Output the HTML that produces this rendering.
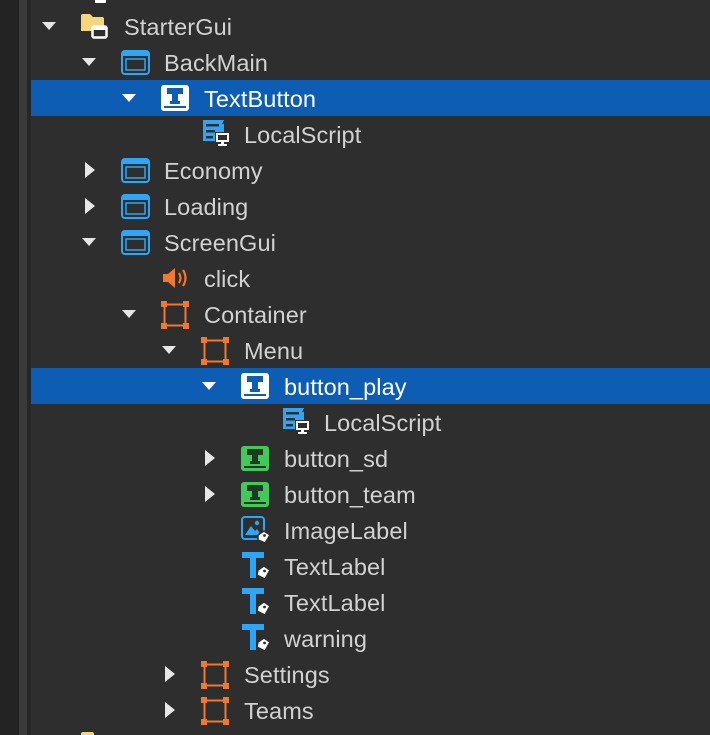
<!DOCTYPE html>
<html><head><meta charset="utf-8"><style>
*{margin:0;padding:0;box-sizing:border-box}
body{width:710px;height:735px;overflow:hidden;background:#2e2e2e;position:relative;font-family:"Liberation Sans",sans-serif}
.s1{position:absolute;left:0;top:0;width:19px;height:735px;background:#232323}
.s2{position:absolute;left:19px;top:0;width:8px;height:735px;background:#3a3a3a}
.s3{position:absolute;left:27px;top:0;width:4px;height:735px;background:#262626}
.row{position:absolute;left:31px;right:0;height:36px}
.sel{background:#0c5db3}
.t{position:absolute;top:5px;font-size:23.5px;color:#d2d2d2;line-height:28px;letter-spacing:0.1px}
.sel .t{color:#fff}
.ar{position:absolute}
.ic{position:absolute;top:6px}
</style></head><body>
<div class="s1"></div><div class="s2"></div><div class="s3"></div>

<div style="position:absolute;left:95px;top:0;width:11px;height:3px;background:#fff;border-radius:0 0 1px 1px"></div>

<div class="row" style="top:8px">
 <svg class="ar" style="left:10px;top:14px" width="16" height="9"><path d="M1 0H15L8 8Z" fill="#e6e6e6"/></svg>
 <svg class="ic" style="left:49px;top:5px" width="30" height="28"><path d="M1 3Q1 1 3 1H10L13 4H22Q24 4 24 6V18H1Z" fill="#f5d77a"/><rect x="12.5" y="13.5" width="14" height="11" rx="1.5" fill="#2e2e2e" stroke="#fff" stroke-width="2.5"/><rect x="12" y="13" width="15" height="4" fill="#fff"/></svg>
 <div class="t" style="left:93px">StarterGui</div>
</div>

<div class="row" style="top:44px">
 <svg class="ar" style="left:50px;top:14px" width="16" height="9"><path d="M1 0H15L8 8Z" fill="#e6e6e6"/></svg>
 <svg class="ic" style="left:90px" width="29" height="25"><rect x="1" y="1" width="27" height="23" rx="3" fill="none" stroke="#2ea6f7" stroke-width="2"/><rect x="1" y="1" width="27" height="5" rx="2" fill="#2ea6f7"/><rect x="5" y="9" width="19" height="11" fill="none" stroke="#2ea6f7" stroke-width="1.5"/></svg>
 <div class="t" style="left:133px">BackMain</div>
</div>

<div class="row sel" style="top:80px">
 <svg class="ar" style="left:90px;top:14px" width="16" height="9"><path d="M1 0H15L8 8Z" fill="#fff"/></svg>
 <svg class="ic" style="left:130px;top:5px" width="28" height="26"><rect x="0" y="0" width="28" height="26" rx="3" fill="#fff"/><path d="M6 3H22V9H17V16H19V19H9V16H11V9H6Z" fill="#0c5db3"/><rect x="3" y="21" width="22" height="2" fill="#0c5db3"/></svg>
 <div class="t" style="left:173px">TextButton</div>
</div>

<div class="row" style="top:116px">
 <svg class="ic" style="left:172px;top:4px" width="28" height="28"><path d="M0 0H21L19 4L21 4V21H0Z" fill="#2ea6f7"/><rect x="3" y="4" width="13" height="2.5" fill="#2e2e2e"/><rect x="3" y="10" width="9" height="2.5" fill="#2e2e2e"/><rect x="3" y="16" width="7" height="2.5" fill="#2e2e2e"/><rect x="12" y="12" width="14" height="10" fill="#2e2e2e"/><rect x="14" y="14" width="11" height="7" fill="none" stroke="#fff" stroke-width="2"/><rect x="18" y="21" width="3" height="3" fill="#fff"/><rect x="15" y="24" width="9" height="2" fill="#fff"/></svg>
 <div class="t" style="left:213px">LocalScript</div>
</div>

<div class="row" style="top:152px">
 <svg class="ar" style="left:54px;top:10px" width="10" height="17"><path d="M0 0L10 8L0 16Z" fill="#e6e6e6"/></svg>
 <svg class="ic" style="left:90px" width="29" height="25"><rect x="1" y="1" width="27" height="23" rx="3" fill="none" stroke="#2ea6f7" stroke-width="2"/><rect x="1" y="1" width="27" height="5" rx="2" fill="#2ea6f7"/><rect x="5" y="9" width="19" height="11" fill="none" stroke="#2ea6f7" stroke-width="1.5"/></svg>
 <div class="t" style="left:133px">Economy</div>
</div>

<div class="row" style="top:188px">
 <svg class="ar" style="left:54px;top:10px" width="10" height="17"><path d="M0 0L10 8L0 16Z" fill="#e6e6e6"/></svg>
 <svg class="ic" style="left:90px" width="29" height="25"><rect x="1" y="1" width="27" height="23" rx="3" fill="none" stroke="#2ea6f7" stroke-width="2"/><rect x="1" y="1" width="27" height="5" rx="2" fill="#2ea6f7"/><rect x="5" y="9" width="19" height="11" fill="none" stroke="#2ea6f7" stroke-width="1.5"/></svg>
 <div class="t" style="left:133px">Loading</div>
</div>

<div class="row" style="top:224px">
 <svg class="ar" style="left:50px;top:14px" width="16" height="9"><path d="M1 0H15L8 8Z" fill="#e6e6e6"/></svg>
 <svg class="ic" style="left:90px" width="29" height="25"><rect x="1" y="1" width="27" height="23" rx="3" fill="none" stroke="#2ea6f7" stroke-width="2"/><rect x="1" y="1" width="27" height="5" rx="2" fill="#2ea6f7"/><rect x="5" y="9" width="19" height="11" fill="none" stroke="#2ea6f7" stroke-width="1.5"/></svg>
 <div class="t" style="left:133px">ScreenGui</div>
</div>

<div class="row" style="top:260px">
 <svg class="ic" style="left:131px" width="28" height="24"><path d="M1 8H6L13 2V22L6 16H1Z" fill="#f07830"/><path d="M17 7Q20 12 17 17" fill="none" stroke="#f07830" stroke-width="2.2"/><path d="M21 4Q26 12 21 20" fill="none" stroke="#f07830" stroke-width="2.2"/></svg>
 <div class="t" style="left:173px">click</div>
</div>

<div class="row" style="top:296px">
 <svg class="ar" style="left:90px;top:14px" width="16" height="9"><path d="M1 0H15L8 8Z" fill="#e6e6e6"/></svg>
 <svg class="ic" style="left:130px;top:5px" width="28" height="28"><rect x="3.5" y="3.5" width="21" height="21" fill="none" stroke="#f07830" stroke-width="2"/><rect x="0" y="0" width="6" height="6" fill="#f07830"/><rect x="22" y="0" width="6" height="6" fill="#f07830"/><rect x="0" y="22" width="6" height="6" fill="#f07830"/><rect x="22" y="22" width="6" height="6" fill="#f07830"/></svg>
 <div class="t" style="left:173px">Container</div>
</div>

<div class="row" style="top:332px">
 <svg class="ar" style="left:130px;top:14px" width="16" height="9"><path d="M1 0H15L8 8Z" fill="#e6e6e6"/></svg>
 <svg class="ic" style="left:170px;top:5px" width="28" height="28"><rect x="3.5" y="3.5" width="21" height="21" fill="none" stroke="#f07830" stroke-width="2"/><rect x="0" y="0" width="6" height="6" fill="#f07830"/><rect x="22" y="0" width="6" height="6" fill="#f07830"/><rect x="0" y="22" width="6" height="6" fill="#f07830"/><rect x="22" y="22" width="6" height="6" fill="#f07830"/></svg>
 <div class="t" style="left:213px">Menu</div>
</div>

<div class="row sel" style="top:368px">
 <svg class="ar" style="left:170px;top:14px" width="16" height="9"><path d="M1 0H15L8 8Z" fill="#fff"/></svg>
 <svg class="ic" style="left:210px;top:5px" width="28" height="26"><rect x="0" y="0" width="28" height="26" rx="3" fill="#fff"/><path d="M6 3H22V9H17V16H19V19H9V16H11V9H6Z" fill="#0c5db3"/><rect x="3" y="21" width="22" height="2" fill="#0c5db3"/></svg>
 <div class="t" style="left:253px">button_play</div>
</div>

<div class="row" style="top:404px">
 <svg class="ic" style="left:252px;top:4px" width="28" height="28"><path d="M0 0H21L19 4L21 4V21H0Z" fill="#2ea6f7"/><rect x="3" y="4" width="13" height="2.5" fill="#2e2e2e"/><rect x="3" y="10" width="9" height="2.5" fill="#2e2e2e"/><rect x="3" y="16" width="7" height="2.5" fill="#2e2e2e"/><rect x="12" y="12" width="14" height="10" fill="#2e2e2e"/><rect x="14" y="14" width="11" height="7" fill="none" stroke="#fff" stroke-width="2"/><rect x="18" y="21" width="3" height="3" fill="#fff"/><rect x="15" y="24" width="9" height="2" fill="#fff"/></svg>
 <div class="t" style="left:293px">LocalScript</div>
</div>

<div class="row" style="top:440px">
 <svg class="ar" style="left:174px;top:10px" width="10" height="17"><path d="M0 0L10 8L0 16Z" fill="#e6e6e6"/></svg>
 <svg class="ic" style="left:210px;top:6px" width="28" height="25"><rect x="0" y="0" width="28" height="25" rx="3" fill="#43c85a"/><path d="M6 3H22V9H17V15H19V18H9V15H11V9H6Z" fill="#1f3a22"/><rect x="3" y="20" width="22" height="2" fill="#1f3a22"/></svg>
 <div class="t" style="left:253px">button_sd</div>
</div>

<div class="row" style="top:476px">
 <svg class="ar" style="left:174px;top:10px" width="10" height="17"><path d="M0 0L10 8L0 16Z" fill="#e6e6e6"/></svg>
 <svg class="ic" style="left:210px;top:6px" width="28" height="25"><rect x="0" y="0" width="28" height="25" rx="3" fill="#43c85a"/><path d="M6 3H22V9H17V15H19V18H9V15H11V9H6Z" fill="#1f3a22"/><rect x="3" y="20" width="22" height="2" fill="#1f3a22"/></svg>
 <div class="t" style="left:253px">button_team</div>
</div>

<div class="row" style="top:512px">
 <svg class="ic" style="left:210px;top:4px" width="30" height="28"><rect x="1" y="1" width="22" height="22" rx="3" fill="none" stroke="#2ea6f7" stroke-width="2"/><circle cx="16" cy="7" r="2.2" fill="#2ea6f7"/><path d="M4 19L10 10L14 15L16 13L20 19Z" fill="#2ea6f7"/><path d="M17 19L23 15L29 19L24 27L17 24Z" fill="#fff" stroke="#2e2e2e" stroke-width="1.5"/><circle cx="23.5" cy="19.5" r="1.4" fill="#2e2e2e"/></svg>
 <div class="t" style="left:253px">ImageLabel</div>
</div>

<div class="row" style="top:548px">
 <svg class="ic" style="left:210px;top:3px" width="30" height="30"><path d="M1 1H23V7H15V27H9V7H1Z" fill="#2ea6f7"/><path d="M17 19L23 15L29 19L24 28L16 24Z" fill="#fff" stroke="#2e2e2e" stroke-width="1.5"/><circle cx="23.5" cy="20" r="1.4" fill="#2e2e2e"/></svg>
 <div class="t" style="left:253px">TextLabel</div>
</div>

<div class="row" style="top:584px">
 <svg class="ic" style="left:210px;top:3px" width="30" height="30"><path d="M1 1H23V7H15V27H9V7H1Z" fill="#2ea6f7"/><path d="M17 19L23 15L29 19L24 28L16 24Z" fill="#fff" stroke="#2e2e2e" stroke-width="1.5"/><circle cx="23.5" cy="20" r="1.4" fill="#2e2e2e"/></svg>
 <div class="t" style="left:253px">TextLabel</div>
</div>

<div class="row" style="top:620px">
 <svg class="ic" style="left:210px;top:3px" width="30" height="30"><path d="M1 1H23V7H15V27H9V7H1Z" fill="#2ea6f7"/><path d="M17 19L23 15L29 19L24 28L16 24Z" fill="#fff" stroke="#2e2e2e" stroke-width="1.5"/><circle cx="23.5" cy="20" r="1.4" fill="#2e2e2e"/></svg>
 <div class="t" style="left:253px">warning</div>
</div>

<div class="row" style="top:656px">
 <svg class="ar" style="left:134px;top:10px" width="10" height="17"><path d="M0 0L10 8L0 16Z" fill="#e6e6e6"/></svg>
 <svg class="ic" style="left:170px;top:5px" width="28" height="28"><rect x="3.5" y="3.5" width="21" height="21" fill="none" stroke="#f07830" stroke-width="2"/><rect x="0" y="0" width="6" height="6" fill="#f07830"/><rect x="22" y="0" width="6" height="6" fill="#f07830"/><rect x="0" y="22" width="6" height="6" fill="#f07830"/><rect x="22" y="22" width="6" height="6" fill="#f07830"/></svg>
 <div class="t" style="left:213px">Settings</div>
</div>

<div class="row" style="top:692px">
 <svg class="ar" style="left:134px;top:10px" width="10" height="17"><path d="M0 0L10 8L0 16Z" fill="#e6e6e6"/></svg>
 <svg class="ic" style="left:170px;top:5px" width="28" height="28"><rect x="3.5" y="3.5" width="21" height="21" fill="none" stroke="#f07830" stroke-width="2"/><rect x="0" y="0" width="6" height="6" fill="#f07830"/><rect x="22" y="0" width="6" height="6" fill="#f07830"/><rect x="0" y="22" width="6" height="6" fill="#f07830"/><rect x="22" y="22" width="6" height="6" fill="#f07830"/></svg>
 <div class="t" style="left:213px">Teams</div>
</div>

<div style="position:absolute;left:81px;top:732px;width:13px;height:3px;background:#f5d77a;border-radius:2px 2px 0 0"></div>
</body></html>
